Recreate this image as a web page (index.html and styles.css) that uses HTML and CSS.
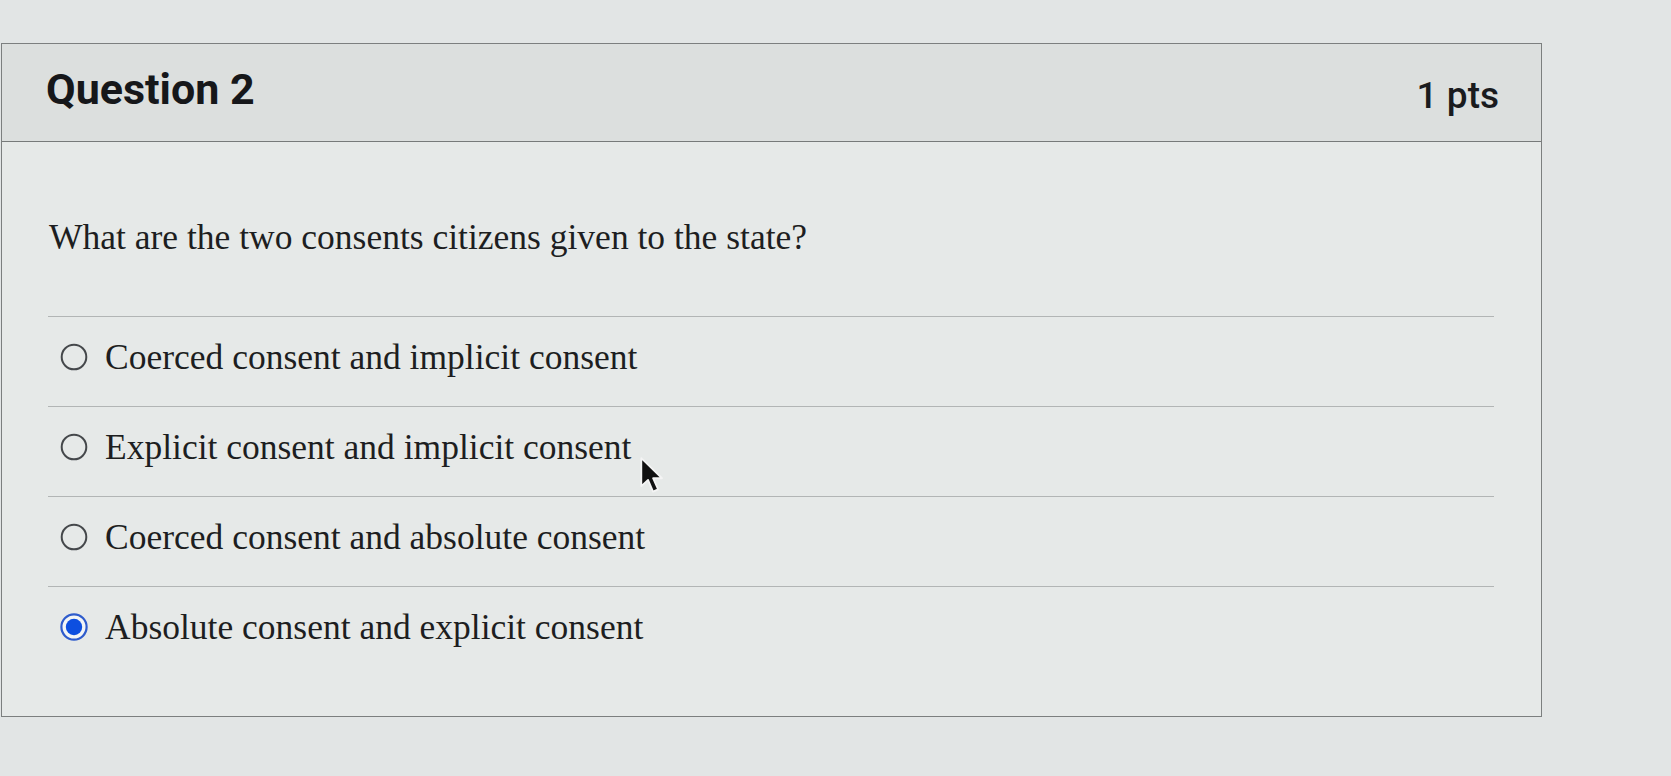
FILE: index.html
```html
<!DOCTYPE html>
<html lang="en">
<head>
<meta charset="utf-8">
<title>Question 2</title>
<link rel="stylesheet" href="styles.css">
</head>
<body>
<div class="page">
  <section class="card">
    <header class="card-header">
      <h2 class="q-title">Question 2</h2>
      <span class="q-points">1 pts</span>
    </header>
    <div class="card-body">
      <p class="q-text">What are the two consents citizens given to the state?</p>
      <ul class="answers">
        <li class="answer">
          <span class="radio">
            <svg viewBox="0 0 28 28" width="28" height="28"><circle cx="14" cy="14" r="12.3" fill="none" stroke="#45484b" stroke-width="2"/></svg>
          </span>
          <span class="answer-label">Coerced consent and implicit consent</span>
        </li>
        <li class="answer">
          <span class="radio">
            <svg viewBox="0 0 28 28" width="28" height="28"><circle cx="14" cy="14" r="12.3" fill="none" stroke="#45484b" stroke-width="2"/></svg>
          </span>
          <span class="answer-label">Explicit consent and implicit consent</span>
        </li>
        <li class="answer">
          <span class="radio">
            <svg viewBox="0 0 28 28" width="28" height="28"><circle cx="14" cy="14" r="12.3" fill="none" stroke="#45484b" stroke-width="2"/></svg>
          </span>
          <span class="answer-label">Coerced consent and absolute consent</span>
        </li>
        <li class="answer">
          <span class="radio">
            <svg viewBox="0 0 28 28" width="28" height="28"><circle cx="14" cy="14" r="12.6" fill="#f3f5f6" stroke="#2f5ccc" stroke-width="2.2"/><circle cx="14" cy="14" r="8.2" fill="#0d4fe0"/></svg>
          </span>
          <span class="answer-label">Absolute consent and explicit consent</span>
        </li>
      </ul>
    </div>
  </section>
  <svg class="cursor" viewBox="0 0 24 34" width="27" height="38">
    <path d="M2 1 L2 26 L8 20.5 L12.5 31 L17 29 L12.5 19 L20.5 19 Z" fill="#111" stroke="#f4f4f4" stroke-width="1.6" stroke-linejoin="round"/>
  </svg>
</div>
</body>
</html>
```

FILE: styles.css
```css
html, body {
  margin: 0;
  padding: 0;
}

body {
  background: #e2e5e5;
  width: 1671px;
  height: 776px;
  overflow: hidden;
}

.page {
  position: relative;
  padding-top: 43px;
}

.card {
  margin-left: 1px;
  width: 1541px;
  box-sizing: border-box;
  border: 1px solid #7c7f7f;
  background: #e6e9e8;
}

.card-header {
  display: flex;
  justify-content: space-between;
  align-items: flex-start;
  height: 98px;
  box-sizing: border-box;
  padding: 21px 42px 0 44px;
  background: #dcdfde;
  border-bottom: 1px solid #777a7a;
}

.q-title {
  margin: 0;
  font-family: Roboto, "Liberation Sans", sans-serif;
  font-weight: 700;
  font-size: 43px;
  line-height: 48px;
  color: #16171a;
}

.q-points {
  margin-top: 7px;
  font-family: Roboto, "Liberation Sans", sans-serif;
  font-weight: 500;
  font-size: 37px;
  line-height: 48px;
  color: #1a1b1e;
}

.card-body {
  padding: 75px 47px 40px 46px;
}

.q-text {
  margin: 0 0 59px 1px;
  font-family: "Liberation Serif", "Times New Roman", serif;
  font-size: 35.5px;
  line-height: 40px;
  color: #1d1e21;
}

.answers {
  list-style: none;
  margin: 0;
  padding: 0;
}

.answer {
  display: flex;
  align-items: center;
  gap: 17px;
  height: 90px;
  box-sizing: border-box;
  padding: 20px 0 29px 12px;
  border-top: 1px solid #b2b5b5;
}

.radio {
  display: block;
  width: 28px;
  height: 28px;
  flex: none;
}

.radio svg {
  display: block;
}

.answer-label {
  font-family: "Liberation Serif", "Times New Roman", serif;
  font-size: 35.5px;
  line-height: 40px;
  color: #1d1e21;
}

.cursor {
  position: absolute;
  left: 639px;
  top: 457px;
}
```
